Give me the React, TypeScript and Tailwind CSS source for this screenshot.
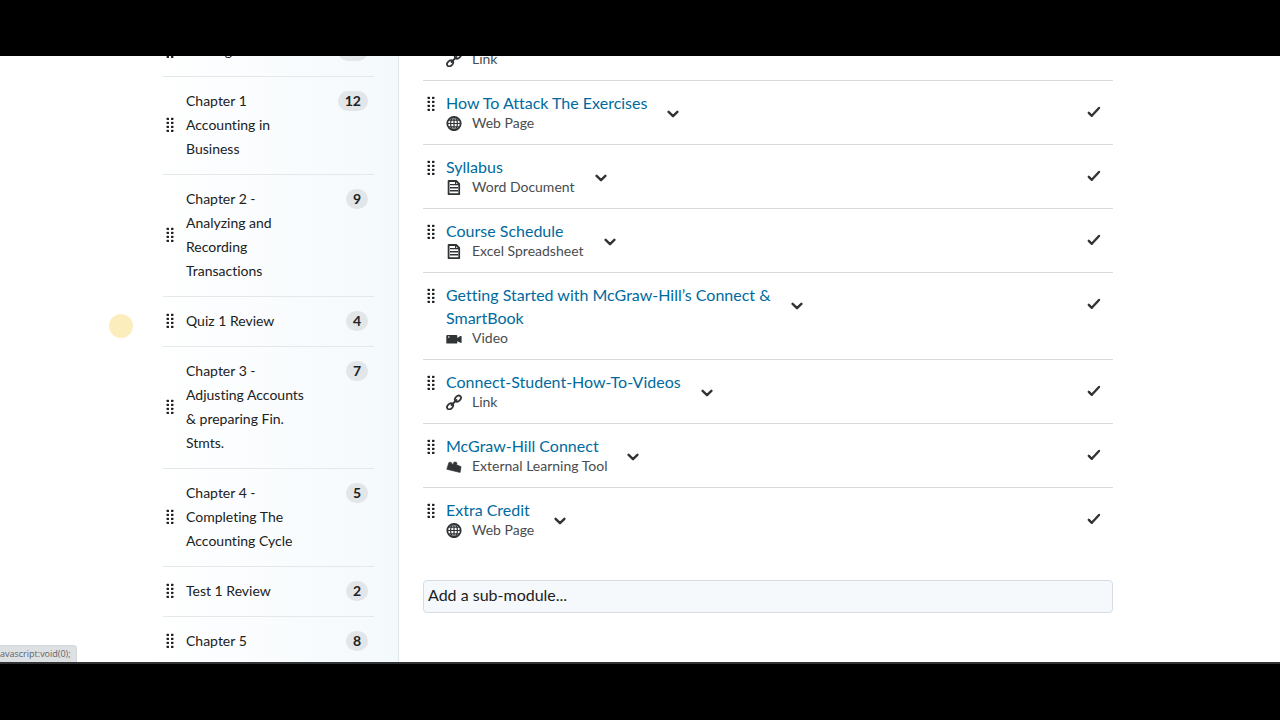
import React from 'react';

type Kind = 'web' | 'doc' | 'video' | 'link' | 'tool';

const chapters = [
  { title: 'Getting Started', count: 10 },
  { title: 'Chapter 1 Accounting in Business', count: 12 },
  { title: 'Chapter 2 - Analyzing and Recording Transactions', count: 9 },
  { title: 'Quiz 1 Review', count: 4 },
  { title: 'Chapter 3 - Adjusting Accounts & preparing Fin. Stmts.', count: 7 },
  { title: 'Chapter 4 - Completing The Accounting Cycle', count: 5 },
  { title: 'Test 1 Review', count: 2 },
  { title: 'Chapter 5', count: 8 },
];

const topics: { title: string; type: string; kind: Kind }[] = [
  { title: 'Course Website', type: 'Link', kind: 'link' },
  { title: 'How To Attack The Exercises', type: 'Web Page', kind: 'web' },
  { title: 'Syllabus', type: 'Word Document', kind: 'doc' },
  { title: 'Course Schedule', type: 'Excel Spreadsheet', kind: 'doc' },
  { title: 'Getting Started with McGraw-Hill’s Connect & SmartBook', type: 'Video', kind: 'video' },
  { title: 'Connect-Student-How-To-Videos', type: 'Link', kind: 'link' },
  { title: 'McGraw-Hill Connect', type: 'External Learning Tool', kind: 'tool' },
  { title: 'Extra Credit', type: 'Web Page', kind: 'web' },
];

function Grip() {
  return (
    <svg viewBox="0 0 8 16" className="w-2 h-4 shrink-0 fill-[#202122]" aria-hidden="true">
      {[0.7, 4.7, 8.7, 12.7].map((y) => (
        <React.Fragment key={y}>
          <rect x="0.6" y={y} width="2.4" height="2.4" rx="0.6" />
          <rect x="5" y={y} width="2.4" height="2.4" rx="0.6" />
        </React.Fragment>
      ))}
    </svg>
  );
}

function KindIcon({ kind }: { kind: Kind }) {
  return (
    <svg viewBox="0 0 16 16" className="w-4 h-4 shrink-0 text-[#303436]" fill="none" stroke="currentColor" aria-hidden="true">
      {kind === 'web' && (
        <g strokeWidth="1.2">
          <circle cx="8" cy="8.5" r="6.7" strokeWidth="1.8" />
          <ellipse cx="8" cy="8.5" rx="3.4" ry="6.5" />
          <path d="M8 2v13M1.5 8.5h13M2.8 5.2h10.4M2.8 11.8h10.4" />
        </g>
      )}
      {kind === 'doc' && (
        <g strokeWidth="1.8">
          <path d="M2.6 2h7.6l3 3v10.2H2.6z" strokeLinejoin="round" />
          <path d="M4 5.6h5M4 8.7h8M4 11.8h8" strokeWidth="1.4" />
          <path d="M9.6 2v3.6h3.6" strokeWidth="1.2" />
        </g>
      )}
      {kind === 'video' && (
        <g fill="currentColor" stroke="none">
          <rect x="0.3" y="5" width="11" height="8.6" rx="0.9" />
          <path d="M10.8 8.2 14.4 6c.6-.3 1.2 0 1.2.6v5.6c0 .6-.6.9-1.2.6l-3.6-1.8z" />
          <circle cx="2.8" cy="7" r="0.8" fill="white" />
        </g>
      )}
      {kind === 'link' && (
        <g strokeWidth="1.8">
          <ellipse cx="4.1" cy="12.4" rx="3.4" ry="2.5" transform="rotate(-45 4.1 12.4)" />
          <ellipse cx="11.9" cy="4.6" rx="3.4" ry="2.5" transform="rotate(-45 11.9 4.6)" />
          <path d="m5.5 11 5-5" strokeLinecap="round" />
        </g>
      )}
      {kind === 'tool' && (
        <path
          d="M2.3 6.3 2.9 4.6c.8-.7 2.4-.4 2.9.3l-.2 1 1.6.3.6-1.8c1-.7 2.8-.3 3.2.5l-.4 1.8 4.5 2-1 5.8L0.8 11.3z"
          fill="currentColor"
          strokeWidth="0.6"
          strokeLinejoin="round"
        />
      )}
    </svg>
  );
}

function Chevron() {
  return (
    <svg viewBox="0 0 12 8" className="w-3 h-2" fill="none" stroke="#303436" strokeWidth="2.4" strokeLinecap="round" strokeLinejoin="round" aria-hidden="true">
      <path d="m1.6 1.8 4.4 4.4 4.4-4.4" />
    </svg>
  );
}

function Check() {
  return (
    <svg viewBox="0 0 14 12" className="w-3.5 h-3 shrink-0" fill="none" stroke="#303436" strokeWidth="2.4" strokeLinecap="round" strokeLinejoin="round" role="img" aria-label="Completed">
      <path d="M1.8 6.8 4.8 9.8 12 2" />
    </svg>
  );
}

function Sidebar() {
  return (
    <nav className="w-[248px] shrink-0 pl-3 pr-6 border-r border-[#dfe6ec] bg-linear-to-r from-white to-[#f4f9fc]">
      {/* list is scrolled part way through its first entry */}
      <ul className="-mt-[29px]">
        {chapters.map((c) => (
          <li key={c.title} className="flex items-center border-b border-[#e4e8eb] pt-3 pb-[13px] pl-[3px]">
            <Grip />
            <a href="#" className="flex-1 flex items-start justify-between pl-3 pr-1.5 text-sm leading-6 text-[#202122]">
              <span className="w-[124px]">{c.title}</span>
              <span className="mt-0.5 min-w-[22px] px-[7px] rounded-full bg-[#e3e6e9] text-center font-bold leading-5">
                {c.count}
              </span>
            </a>
          </li>
        ))}
      </ul>
    </nav>
  );
}

function Topics() {
  return (
    <main className="flex-1 pl-6">
      <div className="max-w-[690px]">
        <ul className="-mt-[39px] divide-y divide-[#d8dadc]">
          {topics.map((t) => (
            <li key={t.title} className="flex items-start pt-2.5 pb-3 pl-1">
              <div className="pt-[5px]">
                <Grip />
              </div>
              <div className="max-w-[336px] pl-[11px]">
                <a href="#" className="block text-base leading-[23px] text-[#006a9e]">
                  {t.title}
                </a>
                <div className="flex items-center gap-2.5 text-sm leading-[18px] text-[#494c4e]">
                  <KindIcon kind={t.kind} />
                  {t.type}
                </div>
              </div>
              <button type="button" aria-label={`Actions for ${t.title}`} className="pt-[19px] pl-5">
                <Chevron />
              </button>
              <div className="ml-auto pt-[15px] pr-3">
                <Check />
              </div>
            </li>
          ))}
        </ul>
        <input
          type="text"
          aria-label="Add a sub-module"
          placeholder="Add a sub-module..."
          className="mt-[29px] block w-full h-[33px] px-1 pb-1 rounded-sm border border-[#d6dce1] bg-[#f5f9fc] text-base placeholder:text-[#202122]"
        />
      </div>
    </main>
  );
}

export default function App() {
  return (
    <div className="h-screen flex flex-col bg-black font-['Lato',sans-serif] [font-variant-ligatures:none]">
      <div className="relative my-14 flex-1 min-h-0 overflow-hidden bg-white border-b-2 border-[#303234]">
        <div className="flex h-full mx-auto max-w-[978px]">
          <Sidebar />
          <Topics />
        </div>
        {/* cursor highlight */}
        <div className="absolute left-[109px] top-[258px] size-6 rounded-full bg-[#fcedbc]" />
        {/* link status */}
        <div className="absolute left-0 bottom-0 h-[17px] w-[77px] overflow-hidden rounded-tr-sm border-t border-r border-[#d3d7da] bg-[#dee1e4]">
          <span className="block whitespace-nowrap font-['Open_Sans',sans-serif] text-[9px] leading-4 text-[#5f6366]">
            avascript:void(0);
          </span>
        </div>
      </div>
    </div>
  );
}
